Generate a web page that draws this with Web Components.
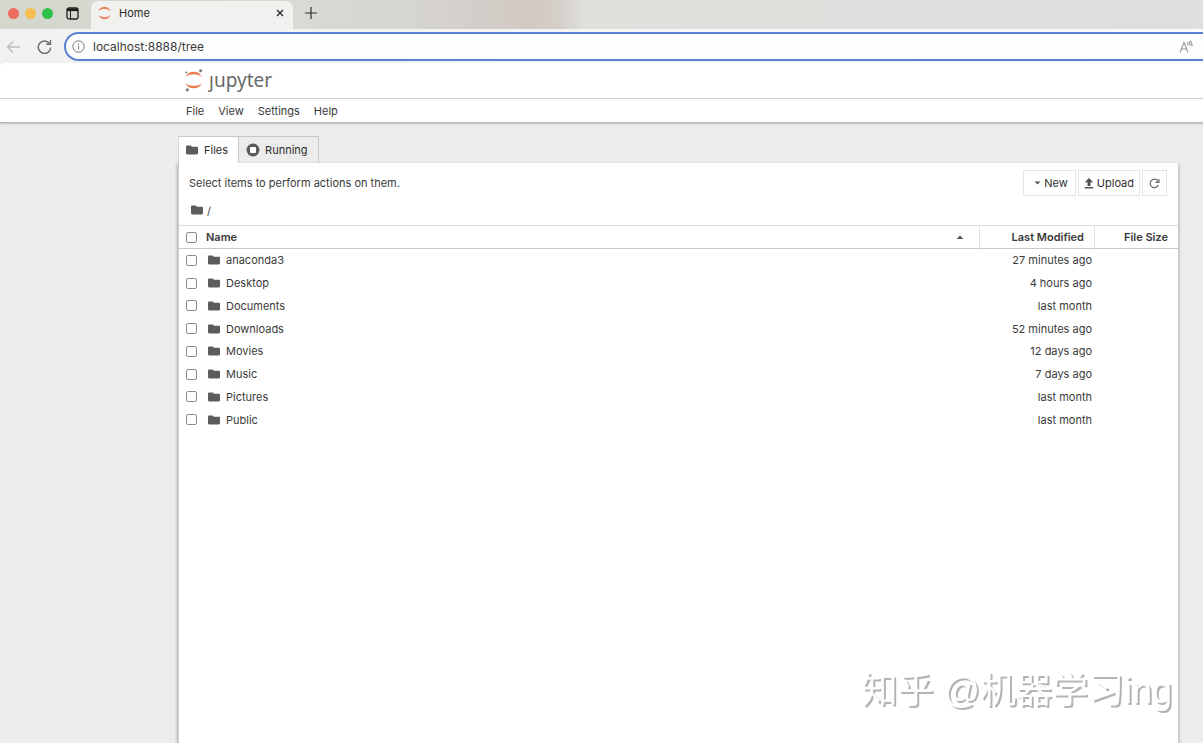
<!DOCTYPE html>
<html lang="en">
<head>
<meta charset="utf-8">
<title>Home</title>
<style>
html, body {
  margin: 0;
  height: 100%;
}
body {
  display: flex;
  flex-direction: column;
  overflow: hidden;
  background: #ededed;
  color: #3a3a3a;
  font: 11px/16px Inter, "Liberation Sans", sans-serif;
}
</style>
</head>
<body>
<browser-bar address="localhost:8888/tree">Home</browser-bar>
<jupyter-header></jupyter-header>
<tree-panel>
  <file-browser></file-browser>
</tree-panel>
<water-mark>知乎 @机器学习ing</water-mark>

<script>
const folder = `<svg class="folder" width="12" height="10" viewBox="0 0 12 10" aria-hidden="true"><path fill="#5c5c5c" d="M1.2 0.5h3.5L6 1.8h4.8c.7 0 1.2.5 1.2 1.1v5.4c0 .7-.5 1.2-1.2 1.2H1.2C.5 9.5 0 9 0 8.3V1.7C0 1 .5.5 1.2.5z"/></svg>`;

function define(name, html, init) {
  const template = document.createElement('template');
  template.innerHTML = html;
  window.customElements.define(name, class extends HTMLElement {
    constructor() {
      super();
      this.attachShadow({ mode: 'open' });
      this.shadowRoot.appendChild(template.content.cloneNode(true));
    }
    connectedCallback() {
      if (init) init(this, this.shadowRoot);
    }
  });
}

define('browser-bar', `
<style>
:host {
  display: block;
  background: linear-gradient(90deg, #f1f1ef, #f4f4f3 40%, #fafbfc);
}
button {
  display: flex;
  padding: 0;
  border: 0;
  background: none;
}
svg { display: block; }
.strip {
  display: flex;
  align-items: center;
  height: 29px;
  background: linear-gradient(90deg, #d5d6cc 0, #d8dad4 300px, #d6d4cf 420px, #d1c9c4 530px, #d5cfca 560px, #dfdfdc 586px, #dfe0de 100%);
}
.lights {
  display: flex;
  gap: 6px;
  padding: 0 13px 2px 8px;
}
.lights i {
  width: 11px;
  height: 11px;
  border-radius: 50%;
  background: #ee6b60;
}
.lights i:nth-child(2) { background: #f5be50; }
.lights i:nth-child(3) { background: #2fc04c; }
.side { padding-bottom: 2px; }
.tab {
  display: flex;
  align-items: center;
  box-sizing: border-box;
  width: 202px;
  height: 28px;
  margin: 1px 12px 0 12px;
  padding: 0 8px 4px 7px;
  border-radius: 7px 7px 0 0;
  background: #f1f1ef;
  color: #2b2b2b;
}
.tab span {
  flex: 1;
  padding-left: 8px;
}
.plus { padding-bottom: 4px; }
.tools {
  display: flex;
  align-items: center;
  padding: 3px 0 2px;
}
.back { padding: 0 16px 0 6px; }
.reload { padding-right: 12px; }
form {
  display: flex;
  align-items: center;
  flex: 1;
  box-sizing: border-box;
  height: 29px;
  padding: 0 10px 0 6px;
  border: 2px solid #5b80d0;
  border-right: 0;
  border-radius: 15px 0 0 15px;
  background: #fdfefe;
}
input {
  flex: 1;
  min-width: 0;
  padding: 0 8px;
  border: 0;
  outline: 0;
  background: none;
  color: #3a3a3a;
  font: 12px/16px Inter, "Liberation Sans", sans-serif;
}
</style>
<div class="strip">
  <div class="lights"><i></i><i></i><i></i></div>
  <button class="side" aria-label="Tab actions"><svg width="13" height="13" viewBox="0 0 13 13" fill="none" stroke="#1d1d1d" stroke-width="1.3"><rect x="1" y="1" width="11" height="11" rx="2"/><path d="M1 2.8h11" stroke-width="2.6"/><path d="M4.5 4v8" stroke-width="1"/></svg></button>
  <div class="tab">
    <svg width="13" height="14" viewBox="0 0 13 14" fill="#e9845c"><path d="M.5 5C1.5 2 4 .7 6.5.7S11.500 2 12.500 5C11 3.500 9 2.900 6.500 2.900S2 3.500.5 5z"/><path d="M.5 9c1 3 3.500 4.300 6 4.300s5-1.300 6-4.300c-1.500 1.500-3.500 2.100-6 2.100S2 10.500.5 9z"/></svg>
    <span><slot></slot></span>
    <button aria-label="Close tab"><svg width="10" height="10" viewBox="0 0 10 10" stroke="#333" stroke-width="1.5"><path d="M2 2l6 6M8 2l-6 6"/></svg></button>
  </div>
  <button class="plus" aria-label="New tab"><svg width="12" height="12" viewBox="0 0 12 12" stroke="#333" stroke-width="1.2"><path d="M6 0v12M0 6h12"/></svg></button>
</div>
<div class="tools">
  <button class="back" aria-label="Back"><svg width="15" height="14" viewBox="0 0 15 14" fill="none" stroke="#bcbcba" stroke-width="1.3"><path d="M14 7H1.500M7 1.500L1.500 7 7 12.500"/></svg></button>
  <button class="reload" aria-label="Reload"><svg width="15" height="16" viewBox="0 0 15 16" fill="none" stroke="#6a6a6a" stroke-width="1.4"><path d="M13.700 8.500A6.200 6.200 0 1 1 12.500 4.500"/><path d="M13.500 1v4.300H9.200"/></svg></button>
  <form>
    <svg width="13" height="13" viewBox="0 0 13 13" fill="none" stroke="#777"><circle cx="6.500" cy="6.500" r="5.700"/><path d="M6.500 5.700v3.800M6.500 3.400v1.300"/></svg>
    <input type="text" aria-label="Address">
    <button type="button" aria-label="Read aloud"><svg width="14" height="14" viewBox="0 0 14 14" fill="none" stroke="#969696" stroke-width="1.1"><path d="M1 12.500L5 2.500l4 10M2.500 9h5"/><path d="M8 2.500c.9.8 1.200 1.700 1 2.900M9.700 1.500c1.300 1.200 1.700 2.600 1.300 4.400M11.300.7c1.600 1.600 2 3.400 1.500 5.600"/></svg></button>
  </form>
</div>
`, (host, root) => {
  root.querySelector('input').value = host.getAttribute('address');
});

define('jupyter-header', `
<style>
:host {
  display: block;
  position: relative;
  border-bottom: 1px solid #b5b5b5;
  border-radius: 4px 0 0 0;
  background: #fff;
  box-shadow: 0 1px 2px rgba(0, 0, 0, 0.2);
}
.brand {
  display: flex;
  align-items: center;
  gap: 5px;
  box-sizing: border-box;
  height: 36px;
  padding: 0 0 2px 184px;
  border-bottom: 1px solid #cbcbcb;
  color: #6a6a6a;
  font: 19px/24px "Noto Sans", "Open Sans", sans-serif;
  text-decoration: none;
}
nav {
  display: flex;
  gap: 14px;
  padding: 4px 0 3px 186px;
}
button {
  padding: 0;
  border: 0;
  background: none;
  color: inherit;
  font: inherit;
}
</style>
<a class="brand" href="#" aria-label="jupyter">
  <svg width="20" height="24" viewBox="0 0 20 24"><g fill="#ec7c4b"><path d="M1.500 8.800C3 5.500 6 3.700 9.700 3.700s6.700 1.800 8.200 5.100c-2-1.800-4.800-2.600-8.200-2.600s-6.200.8-8.200 2.600z"/><path d="M1.500 15.200c1.500 3.300 4.500 5.100 8.200 5.100s6.700-1.800 8.200-5.100c-2 1.800-4.800 2.600-8.200 2.600s-6.200-.8-8.200-2.600z"/></g><g fill="#777"><circle cx="16.600" cy="2.800" r="1.500"/><circle cx="2.200" cy="4.600" r="1"/><circle cx="3.300" cy="21.800" r="1.600"/></g></svg>
  <span>ȷupyter</span>
</a>
<nav>
  <button>File</button>
  <button>View</button>
  <button>Settings</button>
  <button>Help</button>
</nav>
`);

define('tree-panel', `
<style>
:host {
  display: flex;
  flex-direction: column;
  flex: 1;
  padding: 13px 25px 0 178px;
}
.tabs { display: flex; }
.tabs button {
  display: flex;
  align-items: center;
  gap: 5px;
  height: 27px;
  padding: 0 10px 0 7px;
  border: 1px solid #c8c8c8;
  border-bottom: 0;
  border-left: 0;
  background: #ececec;
  color: #2f2f2f;
  font: inherit;
}
.tabs .on {
  position: relative;
  z-index: 1;
  gap: 6px;
  border-left: 1px solid #d5d5d5;
  background: #fff;
}
main {
  flex: 1;
  border-left: 1px solid #c8c8c8;
  background: #fff;
  box-shadow: 0 2px 3px 1px rgba(0, 0, 0, 0.25);
}
</style>
<div class="tabs" role="tablist">
  <button class="on" role="tab" aria-selected="true">${folder}Files</button>
  <button role="tab" aria-selected="false"><svg width="14" height="14" viewBox="0 0 14 14"><circle cx="7" cy="7" r="6.500" fill="#5c5c5c"/><rect x="4" y="4" width="6" height="6" rx="1" fill="#fff"/></svg>Running</button>
</div>
<main><slot></slot></main>
`);

const files = [
  ['anaconda3', '27 minutes ago'],
  ['Desktop', '4 hours ago'],
  ['Documents', 'last month'],
  ['Downloads', '52 minutes ago'],
  ['Movies', '12 days ago'],
  ['Music', '7 days ago'],
  ['Pictures', 'last month'],
  ['Public', 'last month']
];

define('file-browser', `
<style>
:host { display: block; }
.bar {
  display: flex;
  align-items: center;
  gap: 2px;
  padding: 7px 11px 0 10px;
}
.bar p {
  flex: 1;
  margin: 0;
}
.bar button {
  display: flex;
  align-items: center;
  justify-content: center;
  gap: 3px;
  box-sizing: border-box;
  height: 26px;
  min-width: 25px;
  padding: 0 5px;
  border: 1px solid #e4e4e4;
  background: #fff;
  color: #2f2f2f;
  font: inherit;
}
.bar .new { padding: 0 7px 0 10px; }
.crumbs {
  display: flex;
  align-items: center;
  gap: 4px;
  padding: 7px 12px 6px;
}
a {
  color: inherit;
  text-decoration: none;
}
table {
  width: 100%;
  height: 206px;
  border-collapse: separate;
  border-spacing: 0;
  table-layout: fixed;
}
th, td {
  padding: 0 2px 0 0;
  text-align: right;
  white-space: nowrap;
}
th {
  box-sizing: border-box;
  height: 24px;
  border-top: 1px solid #dedede;
  border-bottom: 1px solid #c9c9c9;
  font-weight: 600;
}
th + th {
  padding-right: 10px;
  border-left: 1px solid #e2e2e2;
}
th:first-child, td:first-child {
  padding: 0;
  text-align: left;
}
.date { width: 115px; }
.size { width: 84px; }
.cell {
  display: flex;
  align-items: center;
  padding: 0 12px 0 7px;
}
.cell a { margin-left: 6px; }
.cell .folder { margin-left: 11px; }
.cell span {
  flex: 1;
  margin-left: 9px;
}
input {
  appearance: none;
  width: 11px;
  height: 11px;
  margin: 0;
  border: 1px solid #8c8c8c;
  border-radius: 2px;
  background: #fff;
}
</style>
<div class="bar">
  <p>Select items to perform actions on them.</p>
  <button class="new"><svg width="7" height="4" viewBox="0 0 7 4"><path fill="#555" d="M.5.5h6l-3 3z"/></svg>New</button>
  <button><svg width="10" height="11" viewBox="0 0 10 11" fill="#505050"><path d="M5 0L.8 4.200h2.700V8h3V4.200h2.700zM.8 9h8.400v1.500H.8z"/></svg>Upload</button>
  <button aria-label="Refresh"><svg width="11" height="11" viewBox="0 0 11 11" fill="none" stroke="#666" stroke-width="1.2"><path d="M9.300 7A4.200 4.200 0 1 1 8.700 2.800L9.500 4"/><path d="M9.900.9v3.500H6.400"/></svg></button>
</div>
<div class="crumbs"><a href="#" aria-label="Home folder">${folder}</a><a href="#">/</a></div>
<table>
  <thead>
    <tr>
      <th><div class="cell"><input type="checkbox" aria-label="Select all"><span>Name</span><svg width="14" height="4" viewBox="0 0 14 4"><path fill="#555" d="M3.500 4L7 .5 10.500 4z"/></svg></div></th>
      <th class="date">Last Modified</th>
      <th class="size">File Size</th>
    </tr>
  </thead>
  <tbody></tbody>
</table>
`, (host, root) => {
  root.querySelector('tbody').innerHTML = files.map(([name, date]) => `
    <tr>
      <td><div class="cell"><input type="checkbox" aria-label="Select ${name}">${folder}<a href="#">${name}</a></div></td>
      <td>${date}</td>
      <td></td>
    </tr>`).join('');
});

define('water-mark', `
<style>
:host {
  position: fixed;
  right: 31px;
  bottom: 26px;
  color: #fff;
  font: 36px/52px "Liberation Sans", "Noto Sans CJK SC", sans-serif;
  text-shadow: 2px 2px 0 #b4b4b4;
  white-space: nowrap;
  pointer-events: none;
}
</style>
<slot></slot>
`);
</script>
</body>
</html>
